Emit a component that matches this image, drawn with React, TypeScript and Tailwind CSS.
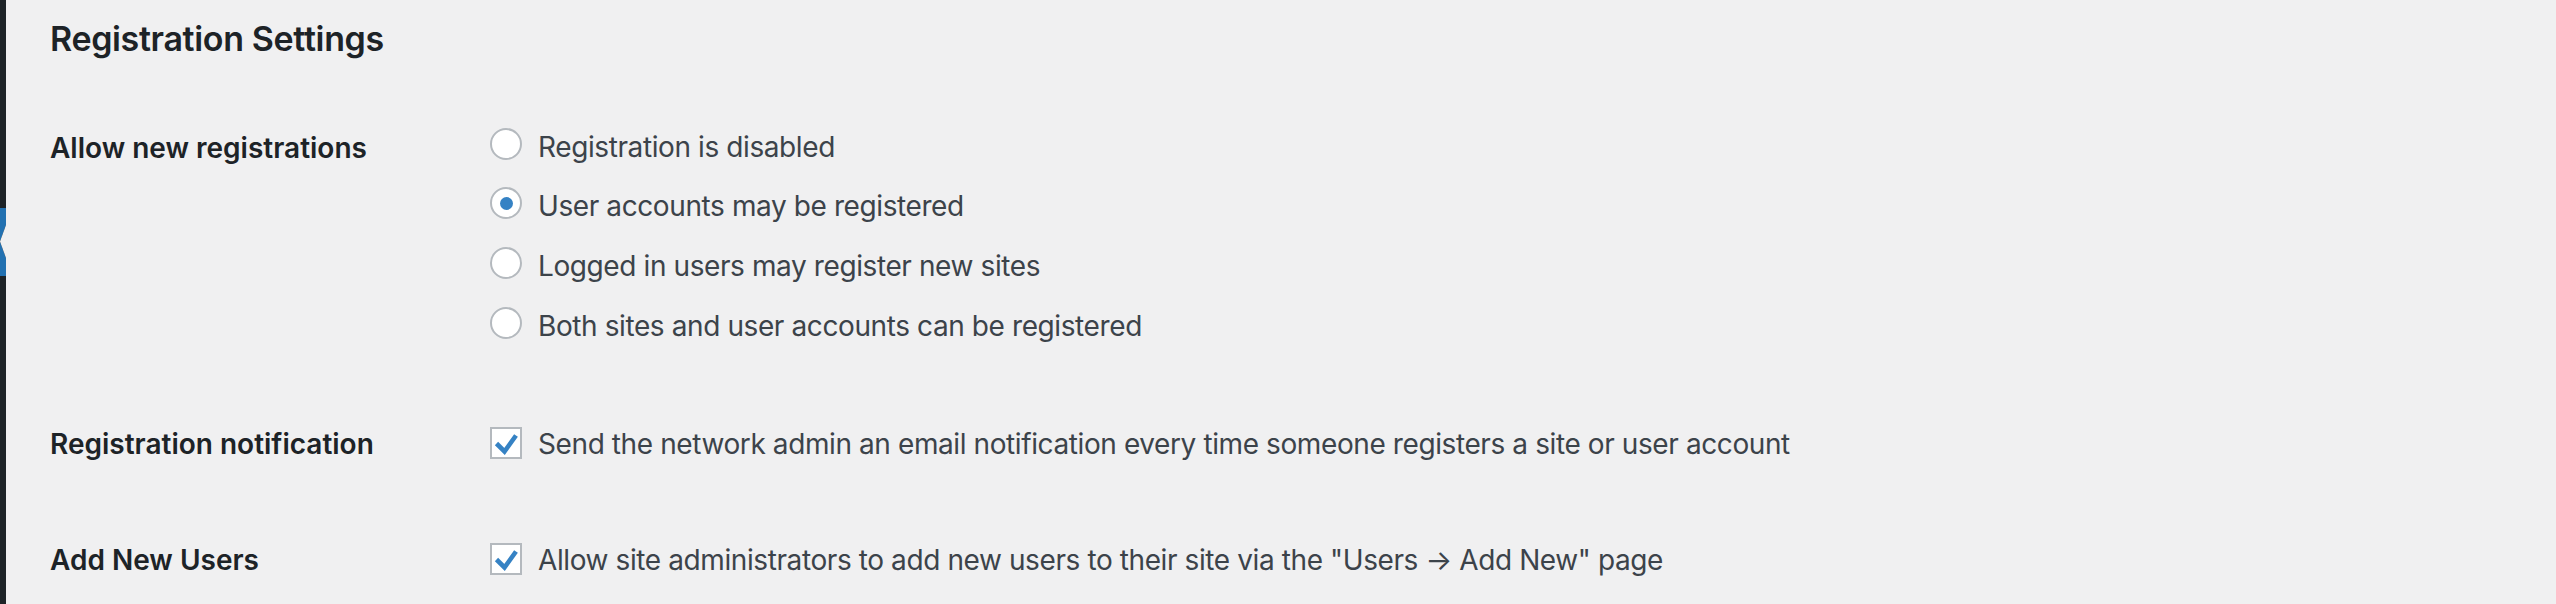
import React from 'react';

const FONT = "font-['Inter','Liberation_Sans',sans-serif]";

function Radio({ checked }: { checked?: boolean }) {
  return (
    <span className="mb-[6px] flex h-[32px] w-[32px] shrink-0 items-center justify-center rounded-full border-2 border-[#b4b9be] bg-white">
      {checked && <span className="h-[13px] w-[13px] rounded-full bg-[#3582c4]" />}
    </span>
  );
}

function Checkbox() {
  return (
    <span className="mb-[3px] flex h-[32px] w-[32px] shrink-0 border-2 border-[#b4b9be] bg-white">
      <svg viewBox="0 0 28 28" className="h-[28px] w-[28px]">
        <polyline
          points="4.5,14.5 12.5,22.5 24,6.5"
          fill="none"
          stroke="#3582c4"
          strokeWidth="4.6"
          strokeLinejoin="miter"
        />
      </svg>
    </span>
  );
}

function Sidebar() {
  return (
    <div className="flex w-[6px] shrink-0 flex-col bg-[#1d2327]">
      <svg viewBox="0 0 6 68" className="mt-[208px] h-[68px] w-[6px]">
        <polygon points="0,0 6,0 6,17 0,33.5 6,50 6,68 0,68" fill="#2271b1" />
        <polygon points="6,17 0,33.5 6,50" fill="#f0f0f1" />
      </svg>
    </div>
  );
}

const options = [
  { label: 'Registration is disabled' },
  { label: 'User accounts may be registered', checked: true },
  { label: 'Logged in users may register new sites' },
  { label: 'Both sites and user accounts can be registered' },
];

const tdText = 'text-[28px] tracking-[-0.4px] leading-none text-[#3c434a]';
const thText = 'text-[28px] font-semibold leading-none text-[#1d2327]';

export default function App() {
  return (
    <div className={`flex h-[604px] w-full overflow-hidden bg-[#f0f0f1] ${FONT}`}>
      <Sidebar />
      <div className="flex flex-1 flex-col pl-[44px]">
        <h2 className="flex h-[77px] items-center text-[34px] font-semibold leading-none tracking-[-0.35px] text-[#1d2327]">
          Registration Settings
        </h2>

        <div className="mt-[40px] flex">
          <div className={`flex h-[60px] w-[440px] shrink-0 items-center pt-[2px] ${thText}`}>
            Allow new registrations
          </div>
          <div className="flex flex-col">
            {options.map((o) => (
              <label key={o.label} className={`flex h-[59.6px] items-center gap-[16px] ${tdText}`}>
                <Radio checked={o.checked} />
                <span>{o.label}</span>
              </label>
            ))}
          </div>
        </div>

        <div className="mt-[59px] flex h-[60px] items-center">
          <div className={`w-[440px] shrink-0 ${thText}`}>Registration notification</div>
          <label className={`flex items-center gap-[16px] ${tdText}`}>
            <Checkbox />
            <span>Send the network admin an email notification every time someone registers a site or user account</span>
          </label>
        </div>

        <div className="mt-[56px] flex h-[60px] items-center">
          <div className={`w-[440px] shrink-0 ${thText}`}>Add New Users</div>
          <label className={`flex items-center gap-[16px] ${tdText}`}>
            <Checkbox />
            <span>Allow site administrators to add new users to their site via the "Users → Add New" page</span>
          </label>
        </div>
      </div>
    </div>
  );
}
